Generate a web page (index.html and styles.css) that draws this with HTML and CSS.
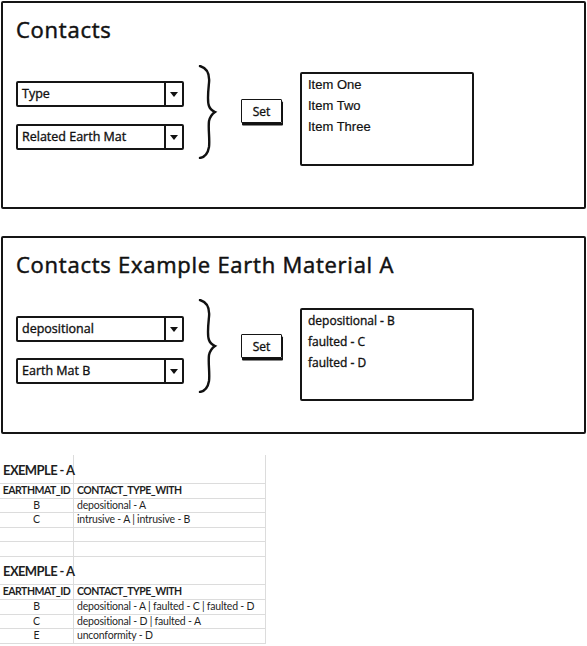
FILE: index.html
```html
<!DOCTYPE html>
<html>
<head>
<meta charset="utf-8">
<link rel="stylesheet" href="styles.css">
</head>
<body>
<div class="panel panel-a">
  <h1 class="title">Contacts</h1>
  <div class="row">
    <div class="selects">
      <div class="select"><span class="label">Type</span><span class="arrow"></span></div>
      <div class="select"><span class="label">Related Earth Mat</span><span class="arrow"></span></div>
    </div>
    <svg class="brace" width="20" height="94" viewBox="0 0 20 94"><path d="M2,1 C9,3 12,8 11,18 C10,28 9,36 11,41 C12,44 15,46 17,47 C14,49 12,52 11,56 C10,64 12,74 11,82 C10,88 7,92 2,93"/></svg>
    <div class="btn">Set</div>
    <ul class="list list-arial">
      <li>Item One</li>
      <li>Item Two</li>
      <li>Item Three</li>
    </ul>
  </div>
</div>
<div class="panel panel-b">
  <h1 class="title">Contacts Example Earth Material A</h1>
  <div class="row">
    <div class="selects">
      <div class="select"><span class="label">depositional</span><span class="arrow"></span></div>
      <div class="select"><span class="label">Earth Mat B</span><span class="arrow"></span></div>
    </div>
    <svg class="brace" width="20" height="94" viewBox="0 0 20 94"><path d="M2,1 C9,3 12,8 11,18 C10,28 9,36 11,41 C12,44 15,46 17,47 C14,49 12,52 11,56 C10,64 12,74 11,82 C10,88 7,92 2,93"/></svg>
    <div class="btn">Set</div>
    <ul class="list list-sketch">
      <li>depositional - B</li>
      <li>faulted - C</li>
      <li>faulted - D</li>
    </ul>
  </div>
</div>
<div class="sheet">
  <div class="cell head">EXEMPLE - A</div><div class="cell"></div>
  <div class="cell bold center">EARTHMAT_ID</div><div class="cell bold">CONTACT_TYPE_WITH</div>
  <div class="cell center">B</div><div class="cell">depositional - A</div>
  <div class="cell center">C</div><div class="cell">intrusive - A | intrusive - B</div>
  <div class="cell"></div><div class="cell"></div>
  <div class="cell"></div><div class="cell"></div>
  <div class="cell head">EXEMPLE - A</div><div class="cell"></div>
  <div class="cell bold center">EARTHMAT_ID</div><div class="cell bold">CONTACT_TYPE_WITH</div>
  <div class="cell center">B</div><div class="cell">depositional - A | faulted - C | faulted - D</div>
  <div class="cell center">C</div><div class="cell">depositional - D | faulted - A</div>
  <div class="cell center">E</div><div class="cell">unconformity - D</div>
</div>
</body>
</html>
```

FILE: styles.css
```css
html, body {
  margin: 0;
  padding: 0;
  background: #fff;
}
body {
  width: 587px;
  height: 646px;
  overflow: hidden;
  color: #111;
  font-family: "Open Sans", sans-serif;
}
.panel {
  box-sizing: border-box;
  width: 585px;
  margin-left: 1px;
  border: 2px solid #151515;
  border-radius: 2px;
  padding: 11px 0 0 13px;
}
.panel-a {
  margin-top: 1px;
  height: 208px;
}
.panel-b {
  margin-top: 27px;
  height: 198px;
}
.title {
  margin: 0;
  font-family: "Open Sans", sans-serif;
  font-weight: 400;
  font-size: 22px;
  line-height: 30px;
  letter-spacing: 0.75px;
  color: #111;
  -webkit-text-stroke: 0.5px #111;
}
.row {
  display: flex;
  align-items: flex-start;
}
.panel-a .row { margin-top: 21px; }
.panel-b .row { margin-top: 20px; }
.selects {
  display: flex;
  flex-direction: column;
  gap: 17px;
  margin-top: 16px;
}
.panel-b .selects { margin-top: 17px; gap: 16px; }
.select {
  box-sizing: border-box;
  display: flex;
  width: 168px;
  height: 26px;
  border: 2px solid #151515;
  border-radius: 2px;
}
.label {
  flex: 1;
  padding-left: 4px;
  font-size: 12.5px;
  font-weight: 400;
  line-height: 22px;
  white-space: nowrap;
  -webkit-text-stroke: 0.35px #111;
}
.arrow {
  width: 16px;
  border-left: 2px solid #151515;
  display: flex;
  align-items: center;
  justify-content: center;
}
.arrow::before {
  content: "";
  border-left: 4px solid transparent;
  border-right: 4px solid transparent;
  border-top: 5px solid #111;
}
.brace {
  margin-left: 14px;
  fill: none;
  stroke: #111;
  stroke-width: 2.4;
  stroke-linecap: round;
}
.btn {
  box-sizing: border-box;
  width: 41px;
  height: 24px;
  margin-left: 23px;
  margin-top: 34px;
  border: 1.5px solid #151515;
  border-radius: 1px;
  box-shadow: 1px 2.5px 0 #111;
  display: flex;
  align-items: center;
  justify-content: center;
  font-size: 12px;
  -webkit-text-stroke: 0.35px #111;
}
.panel-b .btn { margin-top: 35px; }
.list {
  box-sizing: border-box;
  width: 174px;
  height: 94px;
  margin: 7px 0 0 18px;
  padding: 0 0 0 6px;
  list-style: none;
  border: 2px solid #151515;
  border-radius: 2px;
}
.panel-b .list { margin-top: 9px; height: 93px; }
.list li {
  line-height: 21px;
  white-space: nowrap;
}
.list-arial li {
  font-family: "Liberation Sans", Arial, sans-serif;
  font-size: 13px;
  -webkit-text-stroke: 0.2px #111;
}
.list-sketch li {
  font-family: "Open Sans", sans-serif;
  font-size: 12px;
  -webkit-text-stroke: 0.35px #111;
}
.sheet {
  margin-top: 21px;
  display: grid;
  grid-template-columns: 74px 192px;
  grid-template-rows: 29px repeat(5, 14.5px) 28.5px repeat(4, 14.8px);
  font-family: Lato, sans-serif;
  color: #1f1f1f;
}
.cell {
  box-sizing: border-box;
  border-right: 1px solid #dcdcdc;
  border-bottom: 1px solid #dcdcdc;
  padding-left: 3px;
  font-size: 10.5px;
  line-height: 13.5px;
  letter-spacing: -0.2px;
  white-space: nowrap;
}
.head {
  font-weight: 700;
  font-size: 13px;
  letter-spacing: -0.6px;
  display: flex;
  align-items: flex-end;
  padding-bottom: 5px;
  line-height: 15px;
}
.bold {
  font-weight: 700;
  letter-spacing: -0.5px;
}
.center {
  text-align: center;
  padding-left: 0;
}
```
